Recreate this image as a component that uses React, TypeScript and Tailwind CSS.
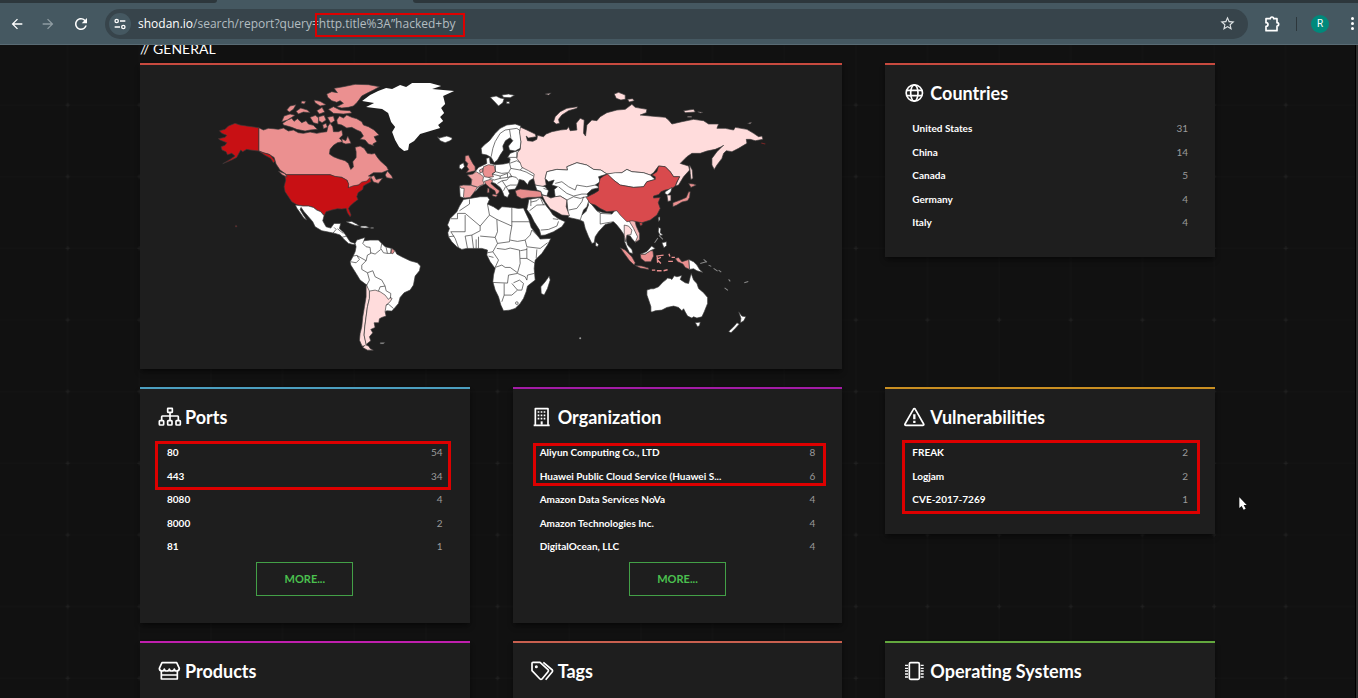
import type { ReactNode } from "react";
import { MdArrowBack, MdArrowForward, MdRefresh, MdStarBorder } from "react-icons/md";

type Row = { name: string; count: number };

const countries: Row[] = [
  { name: "United States", count: 31 },
  { name: "China", count: 14 },
  { name: "Canada", count: 5 },
  { name: "Germany", count: 4 },
  { name: "Italy", count: 4 },
];

const ports: Row[] = [
  { name: "80", count: 54 },
  { name: "443", count: 34 },
  { name: "8080", count: 4 },
  { name: "8000", count: 2 },
  { name: "81", count: 1 },
];

const organizations: Row[] = [
  { name: "Aliyun Computing Co., LTD", count: 8 },
  { name: "Huawei Public Cloud Service (Huawei S...", count: 6 },
  { name: "Amazon Data Services NoVa", count: 4 },
  { name: "Amazon Technologies Inc.", count: 4 },
  { name: "DigitalOcean, LLC", count: 4 },
];

const vulnerabilities: Row[] = [
  { name: "FREAK", count: 2 },
  { name: "Logjam", count: 2 },
  { name: "CVE-2017-7269", count: 1 },
];

/* ---------- icons ---------- */

function IconBox({ children }: { children: ReactNode }) {
  return (
    <svg
      viewBox="0 0 72 60"
      className="h-5 w-6 shrink-0"
      fill="none"
      stroke="white"
      strokeWidth="5"
      strokeLinejoin="round"
      aria-hidden="true"
    >
      {children}
    </svg>
  );
}

const GlobeIcon = () => (
  <IconBox>
    <circle cx="34" cy="30" r="24.500" />
    <ellipse cx="34" cy="30" rx="11" ry="24.500" />
    <path d="M11 22h46M11 38h46" />
  </IconBox>
);

const SitemapIcon = () => (
  <IconBox>
    <rect x="29" y="4" width="14" height="12" rx="1" />
    <path d="M36 16v24M11 40V29q0-2 2-2h46q2 0 2 2v11" />
    <rect x="4" y="41" width="13" height="13" rx="2" />
    <rect x="29" y="41" width="13" height="13" rx="2" />
    <rect x="54" y="41" width="13" height="13" rx="2" />
  </IconBox>
);

const BuildingIcon = () => (
  <IconBox>
    <path d="M13 54V5h38v49M8 55h48" />
    <path d="M20 15h5M29 15h5M38 15h5M20 25h5M29 25h5M38 25h5M20 35h5M29 35h5M38 35h5" />
    <path d="M32 43v10" strokeWidth="6" />
  </IconBox>
);

const WarningIcon = () => (
  <IconBox>
    <path d="M34 5q2 0 3 2l25 44q2 4-2 4H8q-4 0-2-4L31 7q1-2 3-2Z" />
    <path d="M34 22v15M34 41v7" strokeWidth="7" />
  </IconBox>
);

const StoreIcon = () => (
  <IconBox>
    <path d="M12 5h44l8 17q0 8-8 8-7 0-7-6 0 6-8 6-7 0-7-6 0 6-8 6-7 0-7-6 0 6-7 6-8 0-8-8Z" />
    <path d="M10 30v24h48V30M10 42h48" />
  </IconBox>
);

const TagsIcon = () => (
  <IconBox>
    <path d="M3 7q0-3 3-3h21l24 22q3 3 0 6L33 54q-3 3-6 0L3 29Z" />
    <path d="M37 4l27 23q2 3 0 5L44 56" />
    <circle cx="16" cy="17" r="2" />
  </IconBox>
);

const ChipIcon = () => (
  <IconBox>
    <rect x="19" y="5" width="30" height="50" rx="4" />
    <path d="M6 13h9M6 22h9M6 30h9M6 39h9M6 48h9M53 13h9M53 22h9M53 30h9M53 39h9M53 48h9" strokeWidth="4" />
  </IconBox>
);

/* ---------- browser toolbar ---------- */

function BrowserBar() {
  return (
    <header className="shrink-0 bg-[#455861]">
      <div className="flex h-[3px]">
        <div className="w-[217px] rounded-br-lg bg-[#2d373c]" />
        <div className="w-[196px]" />
        <div className="flex-1 rounded-bl-lg bg-[#2d373c]" />
      </div>
      <div className="flex h-[42px] items-center border-b border-[#596b74] pl-2 text-white">
        <button aria-label="Back" className="flex w-[18px] justify-center">
          <MdArrowBack size={16} />
        </button>
        <button aria-label="Forward" className="ml-[13px] flex w-[18px] justify-center text-[#8f9ca2]">
          <MdArrowForward size={16} />
        </button>
        <button aria-label="Reload" className="ml-[15px] flex w-[18px] justify-center">
          <MdRefresh size={18} />
        </button>

        <div className="ml-[15px] flex h-[30px] flex-1 items-center rounded-full bg-[#37444b] pl-1">
          <button
            aria-label="Site information"
            className="flex size-[22px] items-center justify-center rounded-full bg-[#455861]"
          >
            <svg viewBox="0 0 36 36" className="size-3" fill="none" stroke="white" strokeWidth="4" aria-hidden="true">
              <circle cx="8" cy="9" r="5" />
              <path d="M18 9h16M2 27h16" />
              <circle cx="28" cy="27" r="5" />
            </svg>
          </button>
          <p className="ml-[7px] flex-1 font-['Open_Sans',sans-serif] text-xs leading-5 text-[#b4bdc1]">
            <span className="text-white">shodan.io</span>/search/report?query=
            <span className="relative inline-block">
              http.title%3A”hacked+by
              <span className="absolute -top-px -right-[10px] -left-1 h-6 border-2 border-[#dd0000]" />
            </span>
          </p>
          <button aria-label="Bookmark this page" className="mr-3 text-[#dfe3e5]">
            <MdStarBorder size={17} />
          </button>
        </div>

        <button aria-label="Extensions" className="ml-4">
          <svg viewBox="0 0 48 48" className="size-4" fill="none" stroke="white" strokeWidth="5" strokeLinejoin="round" aria-hidden="true">
            <path d="M6 8h13q0-5 5-5t5 5h10v12q5 0 5 5t-5 5v14H6V31q6 0 6-5.500T6 20Z" />
          </svg>
        </button>
        <div className="ml-4 h-3.5 w-px bg-[#2d373c]" />
        <button
          aria-label="Profile"
          className="ml-[14px] flex size-[18px] items-center justify-center rounded-full bg-[#00897b] font-[Roboto,sans-serif] text-[10px]"
        >
          R
        </button>
        <button aria-label="Menu" className="ml-[22px] flex w-[7px] flex-col gap-[2px]">
          <span className="size-[3px] rounded-full bg-white" />
          <span className="size-[3px] rounded-full bg-white" />
          <span className="size-[3px] rounded-full bg-white" />
        </button>
      </div>
    </header>
  );
}

/* ---------- world map ---------- */

const WHITE = "#ffffff";
const PALE = "#ffdcdc";
const PINK = "#eb9090";
const RED = "#c81014";
const CHINA = "#d94a4d";

type Shape = [fill: string, d: string];

const northAmerica: Shape[] = [
  [PINK, "M176 173L190 180 205 175 220 176 235 178 250 174 265 183 280 180 295 188 310 190 330 186 350 190 365 187 380 185 384 168 390 160 398 170 400 185 415 185 425 180 428 195 418 205 428 215 412 218 400 226 390 238 388 252 400 260 415 266 435 272 445 280 452 298 460 291 458 275 468 262 468 245 465 232 480 228 492 235 502 250 515 252 524 250 532 262 540 272 560 290 565 300 545 308 520 308 505 318 520 320 510 330 500 336 480 343 460 350 446 356 442 332 425 322 405 320 390 314 260 314 240 300 228 282 222 262 205 252 190 248 176 243Z"],
  [RED, "M58 182L75 178 85 168 105 160 120 165 140 168 176 173 176 243 195 250 210 254 225 273 220 278 212 265 195 256 176 243 150 240 140 238 128 245 122 240 110 262 95 270 68 281 90 268 105 258 95 250 82 254 78 245 66 240 63 230 75 226 80 218 60 210 55 206 75 202 80 196 65 190Z"],
  [RED, "M260 314L390 314 405 319 425 322 440 330 446 342 444 353 460 347 475 345 485 336 500 333 510 322 513 335 500 342 490 348 488 358 474 368 470 380 474 388 462 397 450 408 445 415 453 435 450 440 442 428 438 415 425 417 412 416 395 420 378 425 372 437 362 425 350 420 340 412 325 408 308 408 290 404 275 395 265 380 255 365 252 350 257 330 254 316Z"],
  [RED, "M107 466l4 2-2 3-3-1z"],
  [PINK, "M555 315L562 303 575 318 578 326 560 323Z"],
  [PINK, "M512 320L522 316 528 328 548 324 535 340 520 336Z"],
  [PINK, "M410 150L418 138 430 144 440 135 455 142 470 146 485 155 490 165 505 170 522 180 537 195 522 200 530 215 518 222 522 228 505 222 495 210 480 208 490 198 482 185 470 180 455 172 440 174 425 165 412 162Z"],
  [PINK, "M380 72L395 65 412 68 402 55 430 50 465 43 505 44 538 50 520 60 500 70 485 78 478 88 470 98 460 108 445 112 425 114 410 110 430 100 420 92 410 97 395 92 383 82Z"],
  [PINK, "M385 118L400 110 420 120 450 122 455 129 430 132 400 130Z"],
  [PINK, "M248 160L262 150 275 145 282 154 292 146 305 158 318 152 325 162 340 166 352 178 330 180 315 183 290 178 275 172 262 168 250 165Z"],
  [PINK, "M245 155L252 138 270 132 285 136 262 150Z"],
  [PINK, "M260 120L270 108 288 104 280 118 268 126Z"],
  [PINK, "M288 124L302 114 322 120 330 128 310 126 295 132Z"],
  [PINK, "M305 93l12 1-4 8-10-2z"],
  [PINK, "M342 90L360 94 378 104 360 108 345 98Z"],
  [PINK, "M350 122l16-10 8 14-16 6z"],
  [PINK, "M330 142l16-6 10 8-2 18-14-4z"],
  [PINK, "M356 140l16-4 6 14-12 8-10-6z"],
  [PINK, "M382 142l18-4 4 14-12 8z"],
  [PINK, "M368 164l10-4 4 12-12 4z"],
  [PINK, "M425 206l12 6 6-14 10 22-16 2-10-4z"],
  [PINK, "M235 303l20 8 6 10-14-6z"],
  [WHITE, "M286 405L308 408 325 408 340 412 350 420 362 425 372 437 368 452 378 470 392 474 402 460 422 460 418 475 432 488 440 500 450 515 465 520 462 524 445 520 432 508 420 495 405 490 385 486 365 482 345 470 338 455 325 440 312 425 303 412 300 418 310 435 320 450 312 445 298 425 290 414Z"],
  [WHITE, "M438 455L455 454 470 462 478 468 465 466 450 460Z"],
  [WHITE, "M482 468L498 468 508 473 494 474 482 473Z"],
  [WHITE, "M512 472h8v3h-8z"],
];

const northAmericaBorders =
  "M402 472L408 478 398 490M412 476L430 490M424 502L440 498";

const southAmerica: Shape[] = [
  [WHITE, "M75 100L80 90 95 85 105 82 102 92 120 90 145 90 155 100 165 110 185 115 195 122 200 132 215 140 240 152 262 158 271 168 268 182 255 198 250 225 240 240 222 248 210 262 205 280 195 292 185 303 170 302 165 305 110 300 110 225 90 210 78 190 62 165 60 155 68 140 75 125 78 110Z"],
  [PALE, "M108 223L118 243 118 265 112 290 108 320 104 350 102 375 108 400 112 407 96 408 88 390 90 370 95 350 98 320 103 290 108 260Z"],
  [PALE, "M118 243L135 240 150 245 165 255 175 268 180 262 186 265 180 275 168 285 165 305 168 318 155 322 148 326 146 338 132 338 135 352 122 358 128 368 118 380 122 392 108 403 102 375 104 350 108 320 112 290 118 265Z"],
  [PALE, "M106 404L116 408 120 415 130 420 112 420 98 412Z"],
  [PINK, "M185 115l9 7-6 9-6-2z"],
  [WHITE, "M150 398l14-1-4 4h-10z"],
];

const southAmericaBorders =
  "M105 85L98 100 108 110 120 112 122 130 112 135 108 152 95 165 95 178 112 188 118 210 110 225M62 155L78 158 88 148 80 136 68 138M80 136L108 152M112 188L128 182 135 200 155 210 165 228 150 230 145 243M165 228L168 242 182 250 181 265M155 100L152 115 160 128 172 130 168 112M152 118L135 132 122 128M183 115L182 130 172 130M168 285L175 282 190 295";

const greenland =
  "M362 101L370 95 378 91 386 88 392 89 400 85 406 87 412 83 430 83 441 86 432 89 454 91 443 96 445 104 441 108 444 113 440 117 443 121 438 125 440 128 430 131 420 134 414 141 409 144 408 150 404 151 399 147 395 140 392 132 395 127 391 122 388 113 382 109 374 108 366 107 374 103Z";

// Europe, Russia and central Asia
const eurasia: Shape[] = [
  [WHITE, "M52 200L58 204 65 202 80 198 95 203 96 208 88 213 75 218 60 212Z"],
  [WHITE, "M210 82L228 78 240 84 252 86 248 98 235 108 226 98Z"],
  [WHITE, "M245 75L265 72 283 76 270 83 250 82Z"],
  [WHITE, "M258 95l10 0 0 6-8 0z"],
  [WHITE, "M300 240L283 245 270 250 262 262 270 266 268 278 250 282 225 284 210 280 208 262 198 265 200 280 190 285 175 292 165 305 158 312 142 315 155 325 152 345 130 345 118 348 120 380 132 384 148 380 155 370 168 362 178 350 195 342 210 335 225 340 240 352 246 362 252 378 262 382 268 370 264 360 285 357 292 345 298 328 312 332 322 344 328 332 345 322 345 300Z"],
  [PALE, "M298 170L320 180 345 192 348 200 325 204 318 198 322 212 338 214 350 208 352 196 370 200 378 192 395 185 420 180 440 178 445 170 450 182 470 180 468 160 480 145 492 150 490 190 496 198 500 165 515 150 530 152 540 140 560 128 590 120 615 118 635 103 645 112 680 118 678 128 660 135 690 138 735 142 745 150 755 162 785 155 820 148 850 152 865 162 895 162 890 175 915 175 940 180 945 172 980 178 1000 190 1015 200 1025 198 1028 208 1005 212 990 208 978 208 980 220 955 235 935 245 918 242 910 250 905 265 890 285 882 298 875 285 875 265 890 245 910 225 908 228 885 238 860 243 840 250 815 250 800 260 780 280 805 288 808 300 790 320 775 345 765 348 778 320 760 320 750 305 735 290 715 288 700 308 690 315 670 308 635 305 620 298 605 308 560 312 542 300 520 298 500 285 470 278 440 290 442 300 410 298 380 305 375 325 378 345 365 350 345 345 340 325 342 312 325 302 305 292 300 278 290 265 292 248 300 238 302 215 298 195Z"],
  [WHITE, "M185 252L183 235 192 225 208 212 225 190 240 175 260 165 285 162 302 168 298 185 302 215 300 235 285 243 268 240 265 228 278 212 270 203 256 212 248 228 250 240 240 255 232 270 222 278 213 262 200 255Z"],
  [PALE, "M400 155L405 140 420 125 440 115 472 110 470 115 445 122 425 135 415 148 418 160 408 162Z"],
  [PALE, "M375 72l18-3-8 6z"],
  [PALE, "M582 72L595 67 615 75 615 88 602 90 588 85Z"],
  [PALE, "M622 88l15-2 5 6-15 4z"],
  [PALE, "M790 122L820 118 825 126 795 128Z"],
  [PALE, "M832 125l16 2-8 2zM802 139h12v3h-12zM982 160l12-3-4 5z"],
  [PALE, "M808 285L816 300 818 325 812 328 810 310Z"],
  [PINK, "M135 258L145 255 150 265 158 280 165 290 165 302 150 306 138 308 146 298 140 290 143 280 135 272Z"],
  [WHITE, "M118 285L130 278 133 290 125 298 117 294Z"],
  ["#f0a5a5", "M118 348L130 345 152 346 172 351 165 362 158 372 150 382 134 384 130 380 132 355 122 354Z"],
  ["#f0a5a5", "M142 315L158 312 168 305 180 312 190 320 188 332 192 342 178 348 172 351 153 345 155 328Z"],
  ["#f0a5a5", "M178 300l10-5v10l-8 4z"],
  [PINK, "M190 290L205 284 222 286 226 305 216 312 220 320 205 322 193 320 188 308Z"],
  [PINK, "M192 334L210 328 218 332 212 340 225 352 238 362 236 368 228 375 224 362 208 352 198 343Z"],
  [PINK, "M218 372l14 3-4 6-12-4zM202 354l5 1v13l-6 0z"],
  ["#e88d8d", "M285 362L300 357 325 360 345 362 362 364 366 380 345 382 325 382 305 386 290 378Z"],
  [WHITE, "M345 345L375 350 385 362 380 378 366 374 362 364 350 360Z"],
  [WHITE, "M375 325L380 305 410 298 442 300 440 290 470 278 500 285 520 298 542 300 560 312 535 320 540 335 525 345 540 352 515 358 500 372 508 385 500 410 490 420 485 435 480 450 445 442 440 390 420 378 405 380 402 358 412 350 395 345 402 330 385 335Z"],
  [PALE, "M365 375L380 378 392 384 405 380 420 378 440 390 438 410 448 437 425 435 408 425 390 416 375 395Z"],
  [WHITE, "M560 312L585 308 605 308 620 298 635 305 670 308 690 315 705 328 680 335 670 350 640 352 600 345 580 330Z"],
  [CHINA, "M540 325L550 318 562 312 580 330 600 345 640 352 670 350 680 335 705 328 705 320 695 315 710 305 715 288 735 290 750 305 760 320 778 320 770 335 765 348 755 355 745 358 735 360 722 365 716 373 700 378 700 384 720 382 714 398 720 415 710 435 690 450 665 458 650 455 635 452 620 455 600 435 590 422 560 425 540 415 525 405 510 400 498 382 512 375 522 370 535 362 535 345Z"],
  [WHITE, "M735 365L755 352 752 365 742 375 734 370Z"],
  [PALE, "M740 375L752 375 752 392 743 394Z"],
  [PINK, "M758 398L780 390 798 382 805 365 810 365 808 382 802 392 785 396 770 405 758 410ZM805 340L820 342 828 345 812 352Z"],
];

const eurasiaBorders =
  "M213 260L218 235 225 215 240 190 255 180 268 178 272 203M268 178L290 175 300 182M226 286L226 305 245 310 265 308 272 295 268 280M205 322L222 330 240 325 262 322 275 320M226 305L216 312 240 318 262 310M232 340L246 332 260 330 270 318 288 322 296 332M258 350L270 345 292 345M246 332L258 350 264 360M272 295L300 300 308 292M268 280L290 272 300 278M264 262L290 262M240 318L240 325M250 362L256 350M405 340L425 335 445 350 465 360 470 345 500 350 525 345M415 350L440 370 460 378 485 372 500 372M440 390L460 380 480 385 505 378M445 420L470 415 485 395 490 380M370 355L385 360M290 245L290 262M300 300L318 306 340 318M262 322L262 310M275 320L268 308";

// Africa, Arabia and India
const southAndWest: Shape[] = [
  [WHITE, "M100 58L120 55 150 50 172 50 178 58 172 72 190 80 205 90 215 80 245 82 265 85 280 84 285 95 296 118 303 142 322 166 330 177 362 175 352 195 335 220 315 240 312 265 315 300 292 318 288 335 280 355 270 370 255 385 240 390 220 392 212 375 205 350 195 330 188 305 190 285 195 265 180 245 170 225 172 210 155 205 135 205 110 205 95 208 80 200 65 185 55 170 53 158 58 145 52 135 60 115 80 95 88 78Z"],
  [WHITE, "M296 58L330 52 338 60 348 77 360 92 368 104 385 116 405 125 395 140 370 155 345 165 332 166 328 150 312 125 302 105 290 88 293 75Z"],
  [WHITE, "M445 92L455 105 468 92 475 75 470 55 480 68 490 80 500 92 520 98 542 100 545 128 525 133 505 155 495 170 492 188 485 190 475 170 465 145 460 125 445 118 440 105 418 105 412 92Z"],
  [WHITE, "M497 185L505 193 502 200 496 197Z"],
  [WHITE, "M357 288L360 300 352 325 342 345 333 340 332 320 345 305Z"],
];

const southAndWestBorders =
  "M62 116L82 116 82 100 105 100 150 138M118 58L118 72 88 92M105 105L105 155 62 155M172 72L178 105 150 138M178 105L200 118 245 138M245 82L245 138M245 125L298 125M150 138L150 152 125 165 105 168M200 118L202 155 195 172 150 168M245 138L240 165 238 185 202 190 195 172M240 180L262 184 285 180 300 165 305 150 325 170M285 180L290 200 330 205 352 188M202 190L188 215 172 218M200 205L225 208 240 204 268 210 270 250 262 278 240 262 225 262 215 255 195 262M290 203L290 235 315 250M320 208L318 235M270 212L290 208M270 235L290 235M188 307L232 309 235 285 262 280M222 310L222 345 215 365M222 345L245 345 262 330M250 308L268 300 280 310 275 330 262 330 245 310M262 280L285 290 290 300 292 285 312 280M125 165L130 205M145 170L145 205M105 168L112 205M138 178V205M62 155L75 175 85 202M55 170L72 168M188 215L205 240 195 262M175 228L190 232M302 58L302 78M330 52L340 75M298 92L320 75 345 74M332 150L355 148 380 138 385 124M368 116L384 118M330 52L320 62 302 66M455 105L470 92M500 92L520 106 538 108M256 369a4 4 0 1 0 8 0a4 4 0 1 0-8 0";

// south-east Asia and Oceania
const southEast: Shape[] = [
  [WHITE, "M0 10L35 12 45 0 62 0 78 14 100 12 112 18 105 30 105 60 118 75 118 88 105 97 95 85 90 78 80 75 78 90 82 105 95 118 98 130 88 128 80 112 73 95 72 75 62 60 50 45 40 35 20 38 0 42Z"],
  [PALE, "M72 45L85 48 95 60 92 74 80 75 76 95 72 75Z"],
  ["#f5b8b8", "M85 18L100 14 110 22 104 32 108 48 118 70 118 88 105 97 112 80 100 55 88 35Z"],
  [CHINA, "M118 38l8-2v9l-6 2z"],
  [WHITE, "M174 22l5-2v10l-4 4zM175 52L182 55 180 68 188 75 180 76 174 66ZM185 98l14-3v12l-8 6z"],
  [PINK, "M60 113L75 120 95 140 105 158 102 165 88 152 72 130ZM105 166L125 168 145 174 145 178 120 174Z"],
  [PINK, "M120 132L135 132 150 122 158 122 160 138 152 155 135 155 122 145Z"],
  [WHITE, "M122 132L140 124 154 108 165 115 150 122 135 132Z"],
  [PINK, "M225 145L235 142 245 155 266 148 268 178 255 172 248 162 232 155Z"],
  [WHITE, "M266 148L280 155 290 165 298 178 308 187 290 182 280 176 268 178Z"],
  [WHITE, "M140 240L152 236 160 236 175 230 188 216 196 210 202 204 210 205 215 208 222 197 230 200 245 196 240 208 255 218 265 220 270 200 273 190 280 210 290 220 295 235 310 248 322 262 322 280 312 305 305 320 290 324 280 320 275 324 262 318 255 306 250 296 245 302 235 292 220 288 200 292 185 300 165 302 155 306 152 304 152 290 146 272 140 255Z"],
  [WHITE, "M285 338L300 336 298 346 292 350Z"],
  [WHITE, "M415 305L425 318 437 320 430 333 420 338 422 325ZM410 338L417 342 405 355 392 368 385 364 400 350Z"],
];

function Region({ shapes, borders, origin }: { shapes: Shape[]; borders?: string; origin: string }) {
  return (
    <g transform={`translate(${origin}) scale(0.33333)`} stroke="#3a3a3a" strokeWidth="2" strokeLinejoin="round">
      {shapes.map(([fill, d]) => (
        <path key={d} fill={fill} d={d} />
      ))}
      {borders && <path fill="none" stroke="#333" d={borders} />}
    </g>
  );
}

function WorldMap() {
  return (
    <svg viewBox="140 65 702 304" className="block w-full" role="img" aria-label="Results by country">
      <path fill={WHITE} d={greenland} />
      <Region shapes={northAmerica} borders={northAmericaBorders} origin="200 70" />
      <Region shapes={southAmerica} borders={southAmericaBorders} origin="330 210" />
      <Region shapes={southAndWest} borders={southAndWestBorders} origin="430 180" />
      <Region shapes={southEast} origin="600 210" />
      <Region shapes={eurasia} borders={eurasiaBorders} origin="420 70" />
      {/* small island chains */}
      <g transform="translate(600 210) scale(0.33333)" fill="none" strokeWidth="4">
        <path stroke={PINK} d="M168 138L190 135M171 140L172 158M172 150L182 160M172 146L182 142M155 180h10M170 182h14M190 182l12-3M206 131l3 8M204 154h14M214 142h10" />
        <path stroke="#8a8a8a" strokeWidth="3" d="M300 160L318 155M310 148l10 8M325 165l8 4M340 175l12 8M355 180l8 6M385 208l5 6M373 233l10 8M432 218l12-4M163 98l10-14M176 76l12 12" />
      </g>
      <circle cx="580" cy="338" r="1" fill="#999" />
      <path d="M761 143l4 1" stroke="#7a2626" />
    </svg>
  );
}

/* ---------- report cards ---------- */

type CardProps = {
  title: string;
  icon: ReactNode;
  accent: string;
  rows?: Row[];
  more?: boolean;
  highlight?: string;
};

function Card({ title, icon, accent, rows = [], more, highlight }: CardProps) {
  return (
    <section className={`relative border-t-2 bg-[#1e1e1e] pt-[18px] pb-[23px] shadow-md shadow-black/40 ${accent}`}>
      <h3 className="flex h-5 items-center gap-[3px] pl-[18px] text-lg font-bold text-white">
        {icon}
        {title}
      </h3>
      <table className="mx-[27px] mt-[14px] w-[calc(100%-54px)] text-[10px]">
        <tbody>
          {rows.map((row) => (
            <tr key={row.name} className="odd:h-[23px] even:h-6">
              <th scope="row" className="p-0 text-left font-bold text-white">
                <a href="#">{row.name}</a>
              </th>
              <td className="p-0 text-right text-[#9b9b9b]">{row.count}</td>
            </tr>
          ))}
        </tbody>
      </table>
      {more && (
        <div className="mt-1 mb-1 flex justify-center">
          <button className="h-[34px] w-[97px] border border-[#43a047] text-[11px] font-bold text-[#4bc04f]">
            MORE...
          </button>
        </div>
      )}
      {highlight && <div className={`pointer-events-none absolute border-3 border-[#dd0000] ${highlight}`} />}
    </section>
  );
}

function GridBackdrop() {
  return (
    <svg className="absolute inset-0 h-full w-full" aria-hidden="true">
      <pattern id="grid" x="31.700" y="23.900" width="71.650" height="71.650" patternUnits="userSpaceOnUse">
        <path d="M36 0v72M0 36h72" stroke="#141414" />
        <path d="M36 34v4M34 36h4" stroke="#222222" />
      </pattern>
      <rect width="100%" height="100%" fill="url(#grid)" />
    </svg>
  );
}

export default function App() {
  return (
    <div className="flex h-screen flex-col overflow-hidden bg-[#111111] font-[Lato,sans-serif]">
      <BrowserBar />
      <div className="flex min-h-0 flex-1">
        <main className="relative flex-1 overflow-hidden">
          <GridBackdrop />
          <div className="relative mx-auto -mt-1.5 max-w-[1075px]">
            <h2 className="h-6 text-sm leading-5 text-white">// GENERAL</h2>
            <div className="grid grid-cols-3 items-start gap-x-[43px] gap-y-[18px]">
              <section className="col-span-2 border-t-2 border-[#c84a3f] bg-[#1e1e1e] shadow-md shadow-black/40">
                <WorldMap />
              </section>
              <Card title="Countries" icon={<GlobeIcon />} accent="border-[#c84a3f]" rows={countries} />
              <Card
                title="Ports"
                icon={<SitemapIcon />}
                accent="border-[#4c9fc0]"
                rows={ports}
                more
                highlight="top-[52px] left-[15px] right-[19px] h-[49px]"
              />
              <Card
                title="Organization"
                icon={<BuildingIcon />}
                accent="border-[#a31ca6]"
                rows={organizations}
                more
                highlight="top-[54px] left-5 right-4 h-[43px]"
              />
              <Card
                title="Vulnerabilities"
                icon={<WarningIcon />}
                accent="border-[#c98f22]"
                rows={vulnerabilities}
                highlight="top-[51px] left-[17px] right-[15px] h-[74px]"
              />
              <Card title="Products" icon={<StoreIcon />} accent="border-[#c01fae]" />
              <Card title="Tags" icon={<TagsIcon />} accent="border-[#c9604f]" />
              <Card title="Operating Systems" icon={<ChipIcon />} accent="border-[#63a83e]" />
            </div>
          </div>
          {/* mouse pointer */}
          <svg viewBox="0 0 24 39" className="absolute top-[452px] left-[1239px] h-[13px] w-2" aria-hidden="true">
            <path d="M1 1v32l7-6 6 11 6-3-6-11h9Z" fill="white" />
          </svg>
        </main>
        <div className="w-[3px] border-l border-black bg-[#2b2b2b]" />
      </div>
    </div>
  );
}
